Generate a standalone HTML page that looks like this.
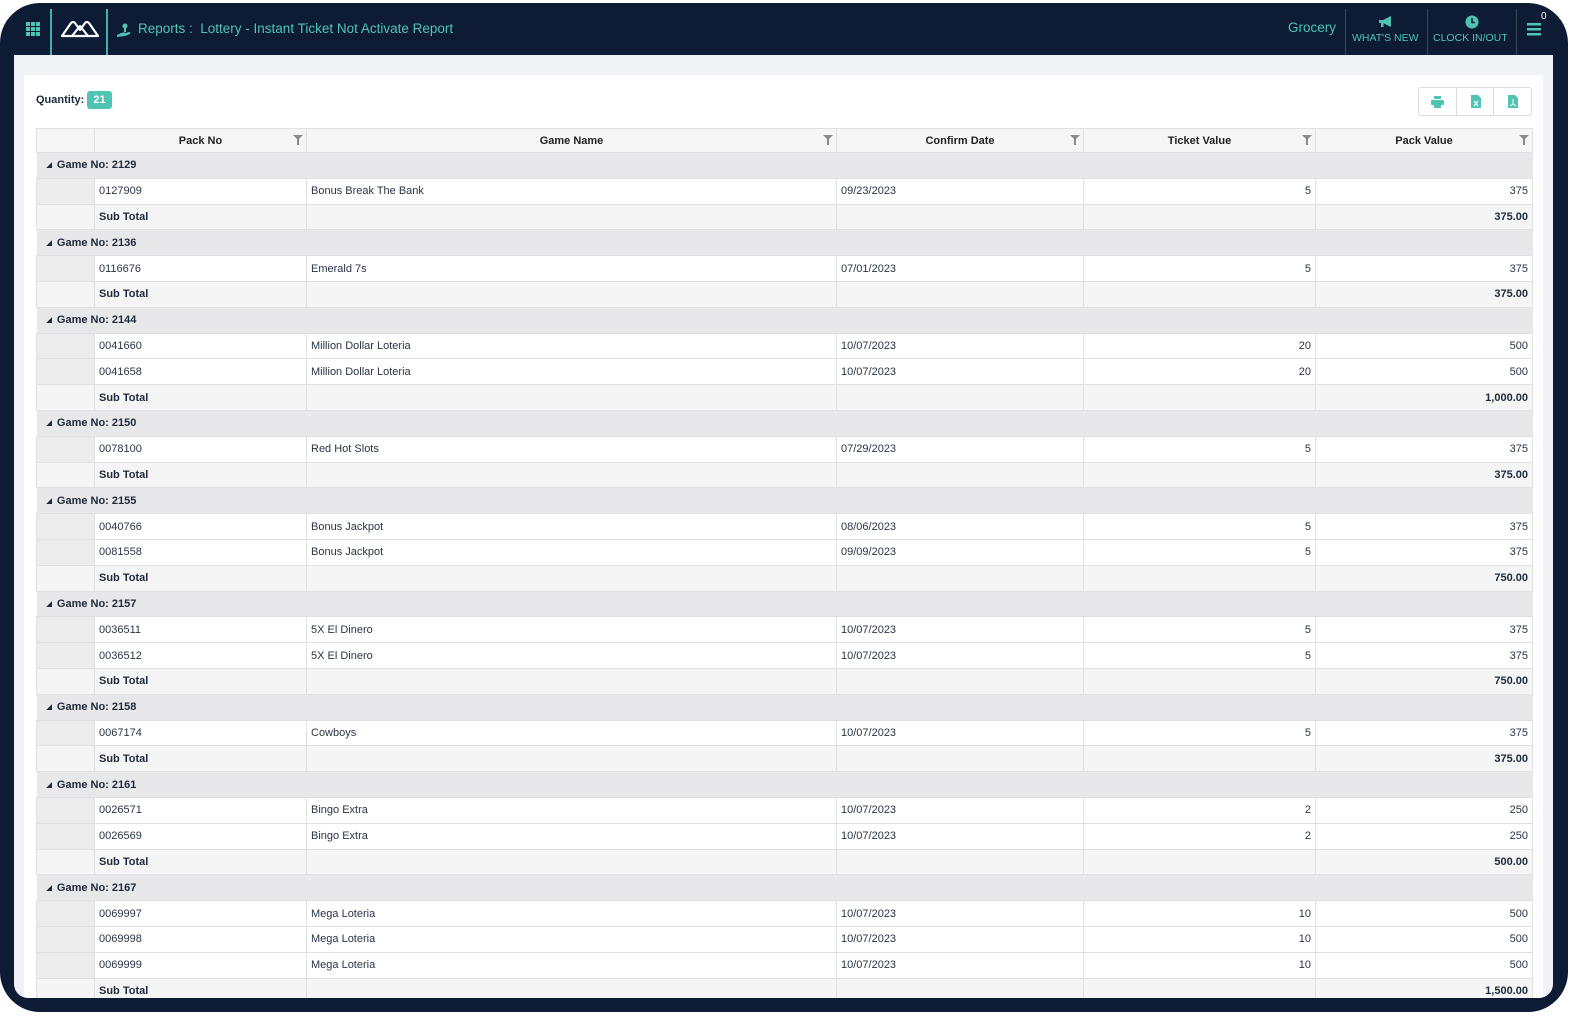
<!DOCTYPE html>
<html><head><meta charset="utf-8"><style>
*{box-sizing:border-box;margin:0;padding:0}
body{width:1584px;height:1022px;background:#fff;position:relative;overflow:hidden;font-family:"Liberation Sans",sans-serif;}
.frame{position:absolute;left:0;top:3px;width:1568px;height:1009px;background:#0d1b35;border-radius:40px;}
.content{position:absolute;left:14px;top:55px;width:1539px;height:943px;background:#f1f2f6;border-radius:0 0 14px 14px;overflow:hidden}
.card{position:absolute;left:10px;top:20px;width:1519px;height:930px;background:#fff}
.top{position:absolute;left:0;top:3px;height:52px;width:1568px;color:#4fc4b4}
.vl{position:absolute;top:6px;width:2px;height:46px;background:#3fb3a4}
.vg{position:absolute;top:6px;width:1px;height:46px;background:#3a4658}
table{position:absolute;left:12px;top:53px;border-collapse:collapse;table-layout:fixed;width:1496px;font-size:11px;color:#2a3446}
td,th{height:25.8px;border:1px solid #e0e0e0;padding:0 4px;white-space:nowrap;overflow:hidden}
th{background:#f6f6f6;font-weight:bold;font-size:11px;height:24px;position:relative;color:#222}
th svg{position:absolute;right:3px;top:6px}
tr.g td{background:#e8e7e9;font-weight:bold;border-left:none;border-right:none;color:#1e2a3c}
tr.g td span{font-size:7px;display:inline-block;margin:0 5px 0 6px;vertical-align:1px}
td.i{background:#ececec}
tr.s td{background:#f5f5f5;font-weight:bold;color:#1e2a3c}
.r{text-align:right}
.badge{display:inline-block;background:#4fc4b4;color:#fff;font-weight:bold;font-size:11px;padding:3px 6px;border-radius:3px}
</style></head><body>
<div class="frame"></div>
<div class="top">
 <svg style="position:absolute;left:26px;top:19px" width="14" height="14"><g fill="#4fc4b4"><rect x="0" y="0" width="4" height="4"/><rect x="5" y="0" width="4" height="4"/><rect x="10" y="0" width="4" height="4"/><rect x="0" y="5" width="4" height="4"/><rect x="5" y="5" width="4" height="4"/><rect x="10" y="5" width="4" height="4"/><rect x="0" y="10" width="4" height="4"/><rect x="5" y="10" width="4" height="4"/><rect x="10" y="10" width="4" height="4"/></g></svg>
 <div class="vl" style="left:50px"></div>
 <svg style="position:absolute;left:60px;top:17px" width="40" height="18"><path d="M2 16 L11 3 Q13 1 15 3 L20 10 L25 3 Q27 1 29 3 L38 16 Z M12 16 L20 6 L28 16" fill="none" stroke="#fff" stroke-width="2.2" stroke-linejoin="round"/></svg>
 <div class="vl" style="left:106px"></div>
 <svg style="position:absolute;left:116px;top:19px" width="16" height="16"><path d="M1 13 L5 11 Q8 10 10 11 L13 10 Q15 10 14 12 L9 14 L1 15Z" fill="#4fc4b4"/><circle cx="9" cy="4" r="2.5" fill="#4fc4b4"/><rect x="8" y="6" width="2" height="4" fill="#4fc4b4"/></svg>
 <div style="position:absolute;left:138px;top:18px;font-size:13.5px">Reports :&nbsp; Lottery - Instant Ticket Not Activate Report</div>
 <div style="position:absolute;left:1288px;top:17px;font-size:13.5px">Grocery</div>
 <div class="vg" style="left:1345px"></div>
 <svg style="position:absolute;left:1378px;top:12px" width="16" height="14"><path d="M1 5 H5 L13 1 V12 L5 8 H1Z" fill="#4fc4b4"/><rect x="3" y="8" width="2.5" height="4" fill="#4fc4b4"/></svg>
 <div style="position:absolute;left:1352px;top:29px;font-size:10.5px">WHAT'S NEW</div>
 <div class="vg" style="left:1427px"></div>
 <svg style="position:absolute;left:1465px;top:12px" width="14" height="14"><circle cx="7" cy="7" r="6.5" fill="#4fc4b4"/><path d="M7 3V7.5H10" stroke="#0d1b35" stroke-width="1.5" fill="none"/></svg>
 <div style="position:absolute;left:1433px;top:29px;font-size:10.5px">CLOCK IN/OUT</div>
 <div class="vg" style="left:1516px"></div>
 <svg style="position:absolute;left:1527px;top:20px" width="14" height="13"><g fill="#4fc4b4"><rect y="0" width="14" height="2.5"/><rect y="5" width="14" height="2.5"/><rect y="10" width="14" height="2.5"/></g></svg>
 <div style="position:absolute;left:1541px;top:8px;font-size:10px;color:#fff">0</div>
</div>
<div class="content"><div class="card">
 <div style="position:absolute;left:12px;top:16px;font-size:11px;color:#1e2a3c;font-weight:bold">Quantity: <span class="badge">21</span></div>
 <div style="position:absolute;left:1394px;top:12px;width:114px;height:29px;border:1px solid #ddd;border-radius:3px;display:flex">
  <div style="flex:1;border-right:1px solid #ddd;position:relative"><svg style="position:absolute;left:12px;top:8px" width="13" height="12"><rect x="3" y="0" width="7" height="3" fill="#4fc4b4"/><rect x="0" y="4" width="13" height="5" rx="1" fill="#4fc4b4"/><rect x="3" y="8" width="7" height="4" fill="#4fc4b4"/></svg></div>
  <div style="flex:1;border-right:1px solid #ddd;position:relative"><svg style="position:absolute;left:14px;top:7px" width="10" height="13"><path d="M0 0H7L10 3V13H0Z" fill="#4fc4b4"/><path d="M3 6L7 11M7 6L3 11" stroke="#fff" stroke-width="1.2"/></svg></div>
  <div style="flex:1;position:relative"><svg style="position:absolute;left:14px;top:7px" width="10" height="13"><path d="M0 0H7L10 3V13H0Z" fill="#4fc4b4"/><path d="M5 4V9L2 11M5 9L8 11" stroke="#fff" stroke-width="1" fill="none"/></svg></div>
 </div>
 <table>
 <colgroup><col style="width:58px"><col style="width:212px"><col style="width:530px"><col style="width:247px"><col style="width:232px"><col style="width:217px"></colgroup>
 <tr><th></th><th>Pack No<svg width="10" height="10"><path d="M0 0H10L6 4V10H4V4Z" fill="#8a8a8a"/></svg></th><th>Game Name<svg width="10" height="10"><path d="M0 0H10L6 4V10H4V4Z" fill="#8a8a8a"/></svg></th><th>Confirm Date<svg width="10" height="10"><path d="M0 0H10L6 4V10H4V4Z" fill="#8a8a8a"/></svg></th><th>Ticket Value<svg width="10" height="10"><path d="M0 0H10L6 4V10H4V4Z" fill="#8a8a8a"/></svg></th><th>Pack Value<svg width="10" height="10"><path d="M0 0H10L6 4V10H4V4Z" fill="#8a8a8a"/></svg></th></tr>
 <tr class="g"><td colspan="6"><span>◢</span>Game No: 2129</td></tr>
 <tr><td class="i"></td><td>0127909</td><td>Bonus Break The Bank</td><td>09/23/2023</td><td class="r">5</td><td class="r">375</td></tr>
 <tr class="s"><td class="i"></td><td>Sub Total</td><td></td><td></td><td></td><td class="r">375.00</td></tr>
 <tr class="g"><td colspan="6"><span>◢</span>Game No: 2136</td></tr>
 <tr><td class="i"></td><td>0116676</td><td>Emerald 7s</td><td>07/01/2023</td><td class="r">5</td><td class="r">375</td></tr>
 <tr class="s"><td class="i"></td><td>Sub Total</td><td></td><td></td><td></td><td class="r">375.00</td></tr>
 <tr class="g"><td colspan="6"><span>◢</span>Game No: 2144</td></tr>
 <tr><td class="i"></td><td>0041660</td><td>Million Dollar Loteria</td><td>10/07/2023</td><td class="r">20</td><td class="r">500</td></tr>
 <tr><td class="i"></td><td>0041658</td><td>Million Dollar Loteria</td><td>10/07/2023</td><td class="r">20</td><td class="r">500</td></tr>
 <tr class="s"><td class="i"></td><td>Sub Total</td><td></td><td></td><td></td><td class="r">1,000.00</td></tr>
 <tr class="g"><td colspan="6"><span>◢</span>Game No: 2150</td></tr>
 <tr><td class="i"></td><td>0078100</td><td>Red Hot Slots</td><td>07/29/2023</td><td class="r">5</td><td class="r">375</td></tr>
 <tr class="s"><td class="i"></td><td>Sub Total</td><td></td><td></td><td></td><td class="r">375.00</td></tr>
 <tr class="g"><td colspan="6"><span>◢</span>Game No: 2155</td></tr>
 <tr><td class="i"></td><td>0040766</td><td>Bonus Jackpot</td><td>08/06/2023</td><td class="r">5</td><td class="r">375</td></tr>
 <tr><td class="i"></td><td>0081558</td><td>Bonus Jackpot</td><td>09/09/2023</td><td class="r">5</td><td class="r">375</td></tr>
 <tr class="s"><td class="i"></td><td>Sub Total</td><td></td><td></td><td></td><td class="r">750.00</td></tr>
 <tr class="g"><td colspan="6"><span>◢</span>Game No: 2157</td></tr>
 <tr><td class="i"></td><td>0036511</td><td>5X El Dinero</td><td>10/07/2023</td><td class="r">5</td><td class="r">375</td></tr>
 <tr><td class="i"></td><td>0036512</td><td>5X El Dinero</td><td>10/07/2023</td><td class="r">5</td><td class="r">375</td></tr>
 <tr class="s"><td class="i"></td><td>Sub Total</td><td></td><td></td><td></td><td class="r">750.00</td></tr>
 <tr class="g"><td colspan="6"><span>◢</span>Game No: 2158</td></tr>
 <tr><td class="i"></td><td>0067174</td><td>Cowboys</td><td>10/07/2023</td><td class="r">5</td><td class="r">375</td></tr>
 <tr class="s"><td class="i"></td><td>Sub Total</td><td></td><td></td><td></td><td class="r">375.00</td></tr>
 <tr class="g"><td colspan="6"><span>◢</span>Game No: 2161</td></tr>
 <tr><td class="i"></td><td>0026571</td><td>Bingo Extra</td><td>10/07/2023</td><td class="r">2</td><td class="r">250</td></tr>
 <tr><td class="i"></td><td>0026569</td><td>Bingo Extra</td><td>10/07/2023</td><td class="r">2</td><td class="r">250</td></tr>
 <tr class="s"><td class="i"></td><td>Sub Total</td><td></td><td></td><td></td><td class="r">500.00</td></tr>
 <tr class="g"><td colspan="6"><span>◢</span>Game No: 2167</td></tr>
 <tr><td class="i"></td><td>0069997</td><td>Mega Loteria</td><td>10/07/2023</td><td class="r">10</td><td class="r">500</td></tr>
 <tr><td class="i"></td><td>0069998</td><td>Mega Loteria</td><td>10/07/2023</td><td class="r">10</td><td class="r">500</td></tr>
 <tr><td class="i"></td><td>0069999</td><td>Mega Loteria</td><td>10/07/2023</td><td class="r">10</td><td class="r">500</td></tr>
 <tr class="s"><td class="i"></td><td>Sub Total</td><td></td><td></td><td></td><td class="r">1,500.00</td></tr>
 </table>
</div></div>
</body></html>
